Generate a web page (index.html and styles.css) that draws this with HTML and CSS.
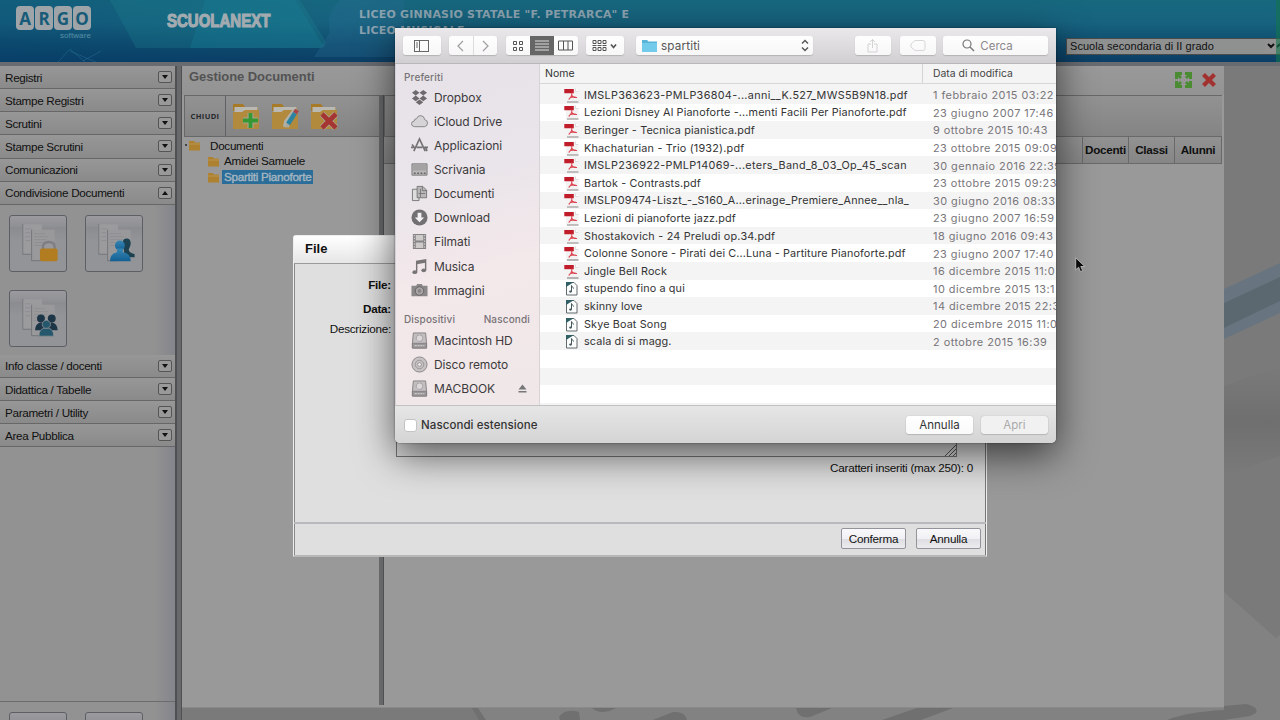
FILE: index.html
```html
<!DOCTYPE html>
<html lang="it">
<head>
<meta charset="utf-8">
<title>Gestione Documenti</title>
<link rel="stylesheet" href="styles.css">
</head>
<body>
<svg class="defs" width="0" height="0">
  <defs>
    <linearGradient id="steel" x1="0" y1="0" x2="0" y2="1"><stop offset="0" stop-color="#3587b4"/><stop offset="1" stop-color="#155f93"/></linearGradient>
    <linearGradient id="band" x1="0" y1="0" x2="0" y2="1"><stop offset="0" stop-color="#6e6e6e" stop-opacity="0"/><stop offset=".5" stop-color="#6c6c6c"/><stop offset="1" stop-color="#6e6e6e" stop-opacity="0"/></linearGradient>
    <symbol id="docs" viewBox="0 0 56 56"><path d="M12 8.500h20v10h-10v20h-10z" fill="#9b9b9e"/><path d="M12.500 8v31h9" fill="none" stroke="#77787b"/><path d="M21 14h24v31h-24z" fill="#99999c"/><path d="M21.500 14v31.500h10" fill="none" stroke="#737578"/><path d="M24 18h11M24 21h14M24 24h13M24 27h14M24 30h10M15 13h6M15 17h5M15 21h5M15 25h5" stroke="#8b8c8f" stroke-width=".8"/></symbol>
    <symbol id="folder" viewBox="0 0 28 28"><path d="M1 2h10l2 3h13v4H1z" fill="#a77a28"/><path d="M2.500 5h23v6h-23z" fill="#b9b8b2"/><path d="M1 10h9l3-2h14v19H1z" fill="#b18a3d"/></symbol>
    <symbol id="minif" viewBox="0 0 12 11"><path d="M0 1h5l1 1.500h5v8H0z" fill="#ad812f"/><path d="M0 4h11" stroke="#b99552"/></symbol>
    <symbol id="pdf" viewBox="0 0 15 15"><path d="M2 .5h9.500l3 3v11H2z" fill="#f4f3f3"/><path d="M11.500.5v3h3" fill="#fff" stroke="#ccc" stroke-width=".6"/><path d="M.3 1h9.500v4.200H.3z" fill="#c01c2a"/><path d="M7.700 4.500c.7 2.500-.9 5-3 7M7.500 7c1 2.100 3 2.700 5.500 2.500M5.500 10c2-.9 4-1.200 6.500-.8" fill="none" stroke="#dc4652" stroke-width="1.100"/><path d="M3 14h11.500" stroke="#8a8585" stroke-width="1.200"/></symbol>
    <symbol id="mus" viewBox="0 0 15 15"><path d="M2.500 1.500h7.500l3 3v9.500H2.500z" fill="#fbfcfc" stroke="#62696c"/><path d="M2 1h8L2 6z" fill="#305f65"/><path d="M7.500 10.500v-6q.3 1.400 2.500 3" fill="none" stroke="#46575e"/><ellipse cx="6.500" cy="10.600" rx="1.400" ry="1.100" fill="#46575e"/></symbol>
    <symbol id="hd" viewBox="0 0 18 18"><path d="M2.500 1h13l1 11v5h-15v-5z" fill="#c2bdbf" stroke="#858183"/><path d="M1.500 12h15v5h-15z" fill="#9b9799" stroke="#858183"/><circle cx="9" cy="6.500" r="3.500" fill="#dcd7d9" stroke="#a5a0a2"/><path d="M9 6.500l-3 3M4 14.500h10" stroke="#ddd" stroke-dasharray="2 1"/></symbol>
    <symbol id="disc" viewBox="0 0 18 18"><circle cx="9" cy="9" r="8" fill="#c6c1c3" stroke="#8a8688"/><circle cx="9" cy="9" r="4.500" fill="none" stroke="#999597"/><circle cx="9" cy="9" r="2" fill="#eee" stroke="#918d8f"/></symbol>
  </defs>
</svg>
<div class="screen">
  <header class="top">
    <svg class="top-art" viewBox="0 0 1280 62" preserveAspectRatio="none">
      <path d="M110 0H300l25 40q2 8-5 8H136z" fill="#1d8090" opacity=".3"/><path d="M205 0h90l28 45q0 3-4 3H190z" fill="#178297" opacity=".3"/>
      <path d="M340 0q-15 15-10 32l-16 25h90V0z" fill="#2b6d94" opacity=".3"/>
      <path d="M58 62l12-13 15 13M70 51l28 12M83 61l18-10" fill="none" stroke="#3180a6" opacity=".35"/>
    </svg>
    <div class="argo"><div class="tiles"><b>A</b><b>R</b><b>G</b><b>O</b></div><span class="soft">software</span></div>
    <div class="brand">SCUOLANEXT</div>
    <div class="school">LICEO GINNASIO STATALE "F. PETRARCA" E<br>LICEO MUSICALE</div>
    <div class="select"><span>Scuola secondaria di II grado</span><svg viewBox="0 0 15 12" width="15" height="12"><path d="M0 0h15v12H0z" fill="#929292"/><path d="M3 4l3 3 3-3M12 7l3-3" fill="none" stroke="#111" stroke-width="2"/></svg></div>
    <i class="edge"></i>
  </header>
  <div class="body">
    <nav class="side">
      <div class="acc"><span>Registri</span><i class="dd"></i></div>
      <div class="acc"><span>Stampe Registri</span><i class="dd"></i></div>
      <div class="acc"><span>Scrutini</span><i class="dd"></i></div>
      <div class="acc"><span>Stampe Scrutini</span><i class="dd"></i></div>
      <div class="acc"><span>Comunicazioni</span><i class="dd"></i></div>
      <div class="acc"><span>Condivisione Documenti</span><i class="dd up"></i></div>
      <div class="tools">
        <div class="tool"><svg viewBox="0 0 56 56"><use href="#docs"/><path d="M33 36v-4q0-5.500 6-5.500t6 5.500v4" fill="none" stroke="#7d7f82" stroke-width="2.500"/><rect x="30" y="33" width="18" height="13" rx="2" fill="#b17d20"/></svg></div>
        <div class="tool"><svg viewBox="0 0 56 56"><use href="#docs"/><path d="M37 27q0-4 4-4t4 5q0 3-2 6 0 3 6 5v3H39z" fill="#1c4251"/><circle cx="34" cy="30" r="5" fill="url(#steel)"/><path d="M31 33h6v4q8 1 8 9H24q0-8 7-9z" fill="url(#steel)"/></svg></div>
        <div class="tool"><svg viewBox="0 0 56 56"><use href="#docs"/><g fill="#1c3547"><circle cx="31" cy="28" r="4"/><circle cx="42" cy="28" r="4"/><path d="M25 40q0-7 6-8h11q6 1 6 8z"/></g><g fill="#25586c" stroke="#8f9092" stroke-width=".8"><circle cx="36.500" cy="34" r="4.200"/><path d="M29 46q0-7 5-8h5q5 1 5 8z"/></g></svg></div>
      </div>
      <div class="acc"><span>Info classe / docenti</span><i class="dd"></i></div>
      <div class="acc"><span>Didattica / Tabelle</span><i class="dd"></i></div>
      <div class="acc"><span>Parametri / Utility</span><i class="dd"></i></div>
      <div class="acc"><span>Area Pubblica</span><i class="dd"></i></div>
      <div class="fill"></div>
      <div class="stubs"><div class="tool"></div><div class="tool"></div></div>
    </nav>
    <div class="split"></div>
    <main class="main">
      <div class="title"><h1>Gestione Documenti</h1>
        <svg width="44" height="18" viewBox="0 0 44 18"><g fill="#4b8c33"><path d="M1 1h7v3H6l2 2-2 2-2-2v2H1zM18 1h-7v3h2l-2 2 2 2 2-2v2h3zM1 17h7v-3H6l2-2-2-2-2 2v-2H1zM18 17h-7v-3h2l-2-2 2-2 2 2v-2h3z"/></g><path d="M29.500 3.500l11 11M40.500 3.500l-11 11" stroke="#a23230" stroke-width="4.200"/></svg>
      </div>
      <div class="cols">
        <section class="tree">
          <div class="bar"><div class="close">CHIUDI</div>
            <svg viewBox="0 0 28 28"><use href="#folder"/><path d="M18.500 11v15M11 18.500h15" stroke="#a7a591" stroke-width="6"/><path d="M18.500 11v15M11 18.500h15" stroke="#369832" stroke-width="3.800"/></svg>
            <svg viewBox="0 0 28 28"><use href="#folder"/><path d="M15 25l1-5 9-12" stroke="#b3b2aa" stroke-width="6" fill="none"/><path d="M17 22l7-11" stroke="#2b83a0" stroke-width="4.500"/><path d="M14 26l1-5 4 3z" fill="#aaa79b"/><path d="M24 11l2-3" stroke="#a94347" stroke-width="4.500"/></svg>
            <svg viewBox="0 0 28 28"><use href="#folder"/><path d="M12 12l14 14M26 12L12 26" stroke="#aaa08a" stroke-width="6.500"/><path d="M12 12l14 14M26 12L12 26" stroke="#a53532" stroke-width="4.600"/></svg>
          </div>
          <div class="node root"><i></i><svg viewBox="0 0 12 11"><use href="#minif"/></svg><span>Documenti</span></div>
          <div class="node kid"><svg viewBox="0 0 12 11"><use href="#minif"/></svg><span>Amidei Samuele</span></div>
          <div class="node kid"><svg viewBox="0 0 12 11"><use href="#minif"/></svg><span class="sel">Spartiti Pianoforte</span></div>
        </section>
        <div class="vbar"></div>
        <section class="list"><div class="bar"></div><div class="heads"><b></b><b>Docenti</b><b>Classi</b><b>Alunni</b></div></section>
      </div>
    </main>
    <svg class="right-art" viewBox="0 0 56 654" preserveAspectRatio="none"><path d="M0 0h56v654H0z" fill="#7a7a7a"/><path d="M0 223L56 197v50L0 273z" fill="#687580"/><path d="M0 237l56-26v24L0 262z" fill="#5c6870"/><path d="M0 320l56-20v90l-56 20z" fill="url(#band)" opacity=".8"/><path d="M0 526l52 46 4-3v85H0z" fill="#828282"/><path d="M0 640l22-2q13 3 10 9l-6 3-26 4z" fill="#707070"/></svg>
    <svg class="foot-art" viewBox="0 0 1042 12" preserveAspectRatio="none"><path d="M0 0h1042v12H0z" fill="#828282"/><path d="M0 0h292l8 12H0z" fill="#7a7a7a"/><path d="M290 0h6l8 12h-7zM377 9q6-9 20-5l1 8h-20zM410 0h24q-15 8-24 0zM471 12l20-8q12-1 14 8zM614 0h36l-22 9q-12 2-14-9zM700 12l35-12h36l-32 12zM985 12q20-8 57-10v10z" fill="#707070"/></svg>
  </div>

  <section class="modal">
    <h2>File</h2>
    <div class="form">
      <label class="req">File:</label><label class="req">Data:</label><label>Descrizione:</label>
      <div class="area"><svg width="12" height="12"><path d="M1 12L12 1M5 12l7-7M9 12l3-3" stroke="#555"/></svg></div>
      <div class="count">Caratteri inseriti (max 250): 0</div>
    </div>
    <div class="actions"><button>Conferma</button><button>Annulla</button></div>
  </section>

  <section class="finder">
    <div class="fbar">
      <div class="fb b1"><svg width="16" height="12"><rect x=".5" y=".5" width="14" height="11" fill="none" stroke="#666"/><path d="M5.500 0v12M2 3h2M2 5h2M2 7h2" stroke="#666"/></svg></div>
      <div class="fb b2"><span><svg width="9" height="14"><path d="M7 2L2 7l5 5" fill="none" stroke="#a3a1a4" stroke-width="1.300"/></svg></span><span><svg width="9" height="14"><path d="M2 2l5 5-5 5" fill="none" stroke="#a3a1a4" stroke-width="1.300"/></svg></span></div>
      <div class="fb b3"><span><svg width="10" height="11"><path d="M.5 1.500h3v3h-3zM6.500 1.500h3v3h-3zM.5 7.500h3v3h-3zM6.500 7.500h3v3h-3z" fill="none" stroke="#555"/></svg></span><span class="on"><svg width="14" height="11"><path d="M0 1h14M0 4h14M0 7h14M0 10h14" stroke="#ddd" stroke-width="1.200"/></svg></span><span><svg width="16" height="11"><path d="M.5 1h14v9H.5zM5.500 1v9M10 1v9" fill="none" stroke="#555"/></svg></span></div>
      <div class="fb b4"><svg width="26" height="14"><g fill="none" stroke="#555"><path d="M1 1.500h3v3H1zM6 1.500h3v3H6zM11 1.500h3v3h-3zM1 8.500h3v3H1zM6 8.500h3v3H6zM11 8.500h3v3h-3z"/><path d="M.5 6.500h14" stroke-dasharray="4 1"/><path d="M19 5.500l2.500 3 2.500-3" stroke-width="1.700"/></g></svg></div>
      <div class="fb b5"><svg width="15" height="13"><path d="M0 1h5l1.500 1.500H15V13H0z" fill="#59b5d8"/><path d="M0 4h15v9H0z" fill="#72cbea"/></svg><span>spartiti</span><svg width="8" height="13"><path d="M1 4.500L4 1.500l3 3M1 8.500l3 3 3-3" fill="none" stroke="#555" stroke-width="1.400"/></svg></div>
      <div class="fb b6"><svg width="12" height="15"><path d="M4 6H1v8h9V6H7M5.500 10V1.500M3 4l2.500-2.500L8 4" fill="none" stroke="#d3d1d3"/></svg></div>
      <div class="fb b7"><svg width="16" height="11"><path d="M5 .5h8q2 0 2 2v6q0 2-2 2H5L1 7V4z" fill="none" stroke="#d8d6d8"/></svg></div>
      <div class="fb b8"><svg width="13" height="13"><circle cx="5" cy="5" r="4" fill="none" stroke="#777" stroke-width="1.200"/><path d="M8 8l4 4" stroke="#777" stroke-width="1.500"/></svg><span>Cerca</span></div>
    </div>
    <div class="fbody">
      <aside class="fav">
        <div class="fh">Preferiti</div>
        <div class="fi"><svg viewBox="0 0 18 18"><path d="M5 1l4 3-4 3-4-3zM13 1l4 3-4 3-4-3zM5 7l4 3-4 3-4-3zM13 7l4 3-4 3-4-3zM9 11l4 3-4 3-4-3z" fill="#6d6b6d"/></svg>Dropbox</div>
        <div class="fi"><svg viewBox="0 0 18 18"><path d="M4 14.500q-3.500-.2-3.500-3t3-3q-.2-2.500 2.500-2.500 1-3.500 4.500-3.200t4 4.200q3 .7 3 3.700t-3 3.800z" fill="#d6d4d6" stroke="#858385"/></svg>iCloud Drive</div>
        <div class="fi"><svg viewBox="0 0 18 18"><path d="M3 15l6-13 6 13M0 11h4M6 11h6M14 11h4M1 8l2 2M17 15l-2-5" fill="none" stroke="#747274" stroke-width="1.700"/></svg>Applicazioni</div>
        <div class="fi"><svg viewBox="0 0 18 18"><path d="M1 3h16v12H1z" fill="#bab7b9" stroke="#7b797b"/><path d="M2 4h14v6H2z" fill="#a5a2a4"/><path d="M3 13h2M6.500 13h2M10 13h2M13.500 13h2" stroke="#666" stroke-width="1.500"/></svg>Scrivania</div>
        <div class="fi"><svg viewBox="0 0 18 18"><path d="M1.500 4.500h7v12h-7z" fill="#ddd" stroke="#777"/><path d="M6.500 1.500h6l4 4v8h-10z" fill="#bbb8ba" stroke="#777"/><path d="M12 1v5h5M10 4v9M8 9h7" fill="none" stroke="#777"/></svg>Documenti</div>
        <div class="fi"><svg viewBox="0 0 18 18"><circle cx="9" cy="9" r="8.500" fill="#727072"/><path d="M7 4h4v5h3l-5 5-5-5h3z" fill="#f3f0f2"/></svg>Download</div>
        <div class="fi"><svg viewBox="0 0 18 18"><path d="M2 1h14v16H2z" fill="#858284"/><path d="M5 2h8v6H5zM5 10h8v6H5z" fill="#cecaca"/><path d="M3.500 2v15M14.500 2v15" stroke="#ddd" stroke-dasharray="1.500 1.500"/></svg>Filmati</div>
        <div class="fi"><svg viewBox="0 0 18 18"><path d="M6 15V3.500L15.500 2v11" fill="none" stroke="#777476" stroke-width="1.500"/><path d="M6 3.500L15.500 2v3L6 6.500z" fill="#777476"/><ellipse cx="4" cy="15" rx="2.500" ry="2" fill="#777476"/><ellipse cx="13.500" cy="13" rx="2.500" ry="2" fill="#777476"/></svg>Musica</div>
        <div class="fi"><svg viewBox="0 0 18 18"><path d="M.5 4h5l1-2h5l1 2h5v11H.5z" fill="#8b888a"/><circle cx="9" cy="9.500" r="4.500" fill="#aaa6a8" stroke="#646163"/><circle cx="9" cy="9.500" r="2" fill="#888486"/></svg>Immagini</div>
        <div class="fh dev"><span>Dispositivi</span><span>Nascondi</span></div>
        <div class="fi"><svg viewBox="0 0 18 18"><use href="#hd"/></svg>Macintosh HD</div>
        <div class="fi"><svg viewBox="0 0 18 18"><use href="#disc"/></svg>Disco remoto</div>
        <div class="fi"><svg viewBox="0 0 18 18"><use href="#hd"/></svg>MACBOOK<svg class="eject" viewBox="0 0 9 9"><path d="M.5 5.500l4-5 4 5zM.5 7h8v1.500h-8z" fill="#777"/></svg></div>
      </aside>
      <div class="files">
        <div class="fr hd"><span>Nome</span><time>Data di modifica</time></div>
        <div class="rows">
          <div class="fr wide"><svg><use href="#pdf"/></svg><span>IMSLP363623-PMLP36804-...anni__K.527_MWS5B9N18.pdf</span><time>1 febbraio 2015 03:22</time></div>
          <div class="fr"><svg><use href="#pdf"/></svg><span>Lezioni Disney Al Pianoforte -...menti Facili Per Pianoforte.pdf</span><time>23 giugno 2007 17:46</time></div>
          <div class="fr"><svg><use href="#pdf"/></svg><span>Beringer - Tecnica pianistica.pdf</span><time>9 ottobre 2015 10:43</time></div>
          <div class="fr mid"><svg><use href="#pdf"/></svg><span>Khachaturian - Trio (1932).pdf</span><time>23 ottobre 2015 09:09</time></div>
          <div class="fr wide"><svg><use href="#pdf"/></svg><span>IMSLP236922-PMLP14069-...eters_Band_8_03_Op_45_scan</span><time>30 gennaio 2016 22:39</time></div>
          <div class="fr"><svg><use href="#pdf"/></svg><span>Bartok - Contrasts.pdf</span><time>23 ottobre 2015 09:23</time></div>
          <div class="fr mid"><svg><use href="#pdf"/></svg><span>IMSLP09474-Liszt_-_S160_A...erinage_Premiere_Annee__nla_</span><time>30 giugno 2016 08:33</time></div>
          <div class="fr"><svg><use href="#pdf"/></svg><span>Lezioni di pianoforte jazz.pdf</span><time>23 giugno 2007 16:59</time></div>
          <div class="fr mid"><svg><use href="#pdf"/></svg><span>Shostakovich - 24 Preludi op.34.pdf</span><time>18 giugno 2016 09:43</time></div>
          <div class="fr"><svg><use href="#pdf"/></svg><span>Colonne Sonore - Pirati dei C...Luna - Partiture Pianoforte.pdf</span><time>23 giugno 2007 17:40</time></div>
          <div class="fr"><svg><use href="#pdf"/></svg><span>Jingle Bell Rock</span><time>16 dicembre 2015 11:0</time></div>
          <div class="fr"><svg><use href="#mus"/></svg><span>stupendo fino a qui</span><time>10 dicembre 2015 13:1</time></div>
          <div class="fr"><svg><use href="#mus"/></svg><span>skinny love</span><time>14 dicembre 2015 22:3</time></div>
          <div class="fr"><svg><use href="#mus"/></svg><span>Skye Boat Song</span><time>20 dicembre 2015 11:0</time></div>
          <div class="fr"><svg><use href="#mus"/></svg><span>scala di si magg.</span><time>2 ottobre 2015 16:39</time></div>
        </div>
      </div>
    </div>
    <div class="ffoot"><i class="cb"></i><span class="ext">Nascondi estensione</span><div class="fbtn">Annulla</div><div class="fbtn off">Apri</div></div>
  </section>
  <svg class="cursor" width="12" height="17" viewBox="0 0 12 17"><path d="M.7.800v12l2.900-2.600 1.900 4.500 2.200-1-1.900-4.200h4z" fill="#0a0a0a" stroke="#bbb" stroke-width=".9"/></svg>
</div>
</body>
</html>
```
FILE: styles.css
```css
* { box-sizing: border-box; }
body { margin: 0; }
.defs { position: absolute; }
.screen { position: relative; width: 1280px; height: 720px; overflow: hidden; background: #7a7a7a; font-family: "Liberation Sans", Arial, sans-serif; font-size: 12px; color: #101010; display: flex; flex-direction: column; }

.top { position: relative; height: 62px; flex: none; background: linear-gradient(90deg, rgba(0,60,110,.25), rgba(0,0,0,0) 30%), linear-gradient(#17687f, #17637f 35%, #0e4a6c 75%, #0b3f66); display: flex; align-items: flex-start; }
.top-art { position: absolute; left: 0; top: 0; width: 1280px; height: 62px; }
.argo { position: relative; margin: 6px 0 0 16px; width: 75px; display: flex; flex-direction: column; }
.tiles { display: flex; gap: 1px; }
.tiles b { width: 18px; height: 24px; border-radius: 4px; background: #9ea4a7; color: #175b79; line-height: 25px; text-align: center; font-family: "Open Sans", sans-serif; font-weight: 700; font-size: 17px; }
.soft { align-self: flex-end; font-size: 8px; line-height: 9px; margin-top: 1px; color: #5790a8; letter-spacing: .1px; }
.brand { position: relative; margin: 11px 0 0 76px; width: 104px; font-weight: 700; font-size: 19px; line-height: 20px; color: #a2abb0; -webkit-text-stroke: 1.2px #a2abb0; transform: scaleX(.79); transform-origin: 0 0; }
.school { position: relative; margin: 7px 0 0 88px; width: 400px; font-family: "DejaVu Sans", Verdana, sans-serif; font-weight: 700; font-size: 11px; line-height: 16px; color: #8ba3b0; letter-spacing: .2px; white-space: nowrap; }
.select { position: absolute; left: 1066px; top: 38px; width: 214px; height: 17px; background: #8f9090; border: 1px solid #4b4b4b; border-right: 0; display: flex; justify-content: space-between; align-items: center; padding: 0 0 1px 3px; font-size: 11px; line-height: 14px; letter-spacing: .05px; }
.edge { position: absolute; right: 0; top: 0; width: 4px; height: 62px; background: #13744f; opacity: .6; }

.body { flex: 1; border-top: 4px solid #686b70; display: grid; grid-template-columns: 175px 7px 1042px 56px; grid-template-rows: 642px 12px; }
.side { grid-row: 1 / 3; display: flex; flex-direction: column; background: #929292; }
.acc { height: 23.150px; flex: none; display: flex; justify-content: space-between; align-items: center; padding: 0 3px 0 5px; background: linear-gradient(#979797, #8a8a8a); border-bottom: 1px solid #676767; font-size: 11.700px; letter-spacing: -.31px; }
.acc .dd { width: 14px; height: 12px; border: 1px solid #555; border-radius: 2px; background: #999; display: flex; justify-content: center; align-items: center; }
.dd::after { content: ""; border: 3.500px solid transparent; border-top: 4px solid #111; border-bottom: 0; }
.dd.up::after { border-top: 0; border-bottom: 4px solid #111; }
.tools { height: 150px; flex: none; padding: 10px 0 0 9px; display: grid; grid-template-columns: 58px 58px; grid-template-rows: 57px 57px; gap: 18px; background: linear-gradient(90deg, #929292 154px, #84858c); }
.tool { width: 58px; height: 57px; border: 1px solid #5c5f64; border-radius: 3px; background: linear-gradient(#9a9a9f, #8f9094 20%, #8b8c90 21%, #939498 45%); }
.tool svg { display: block; width: 56px; height: 55px; }
.fill { flex: 1; background: linear-gradient(90deg, #929292 154px, #84858c); border-bottom: 1px solid #6b6b6b; }
.stubs { height: 18px; flex: none; overflow: hidden; padding: 10px 0 0 9px; display: flex; gap: 18px; background: linear-gradient(90deg, #929292 154px, #84858c); }
.split { grid-row: 1 / 3; background: #68696b; border-left: 2px solid #4f5051; border-right: 1px solid #505052; }
.main { background: #999; display: flex; flex-direction: column; border-bottom: 1px solid #8a8a8a; }
.title { height: 29px; flex: none; display: flex; justify-content: space-between; padding: 3px 6px 0 7px; background: linear-gradient(#999, #939393); }
.title h1 { margin: 0; font-size: 13px; line-height: 15px; color: #535353; letter-spacing: -.05px; }
.title svg { margin-top: 2px; }
.cols { flex: 1; display: flex; padding: 0 2px 2px 2px; }
.tree { width: 195px; display: flex; flex-direction: column; }
.bar { height: 42px; border-top: 1px solid #66686a; border-bottom: 1px solid #66686a; background: linear-gradient(#929292, #848484); display: flex; align-items: center; }
.tree .bar { gap: 11px; border-left: 1px solid #66686a; }
.tree .bar svg { width: 28px; height: 28px; }
.close { width: 41px; height: 40px; line-height: 40px; text-align: center; border-right: 1px solid #5f6164; font-family: "Open Sans", sans-serif; font-weight: 700; font-size: 7.500px; letter-spacing: .35px; color: #25272c; margin-right: -5px; }
.node { display: flex; align-items: center; height: 16px; white-space: nowrap; font-size: 11.700px; letter-spacing: -.29px; }
.node svg { width: 12px; height: 11px; flex: none; }
.root { padding-left: 1px; }
.root i { width: 2px; height: 2px; background: #444; margin-right: 2px; }
.root span { margin-left: 9px; }
.kid { padding-left: 24px; }
.kid span { margin-left: 2px; padding: 0 2px; line-height: 14px; }
.kid span.sel { background: #2a6d98; color: #a5b5c0; -webkit-text-stroke: .4px #a5b5c0; }
.vbar { width: 5px; background: #66686a; border-right: 1px solid #4e4f50; }
.list { flex: 1; }
.list .bar { border-left: 1px solid #66686a; }
.heads { display: grid; grid-template-columns: 1fr 46px 46px 47px; height: 26px; margin-top: -1px; }
.heads b { border: 1px solid #68696b; border-width: 1px 1px 1px 0; background: linear-gradient(#929292, #868686); text-align: center; line-height: 26px; font-size: 11.700px; letter-spacing: -.3px; }
.right-art { width: 56px; height: 654px; grid-column: 4; grid-row: 1 / 3; }
.foot-art { grid-column: 3; grid-row: 2; width: 1042px; height: 12px; }

.modal { position: absolute; left: 293px; top: 235px; width: 694px; height: 322px; background: #dfdfdf; border: 1px solid #eee; border-bottom: 2px solid #b8b8b8; display: flex; flex-direction: column; box-shadow: inset 1px 0 #888, inset -1px 0 #777; border-radius: 3px 3px 0 0; }
.modal h2 { margin: 0; height: 28px; padding-left: 11px; font-size: 13px; line-height: 26px; border-bottom: 1px solid #9b9b9b; background: linear-gradient(#fff, #e6e6e6); flex: none; }
.form { flex: 1; display: flex; flex-direction: column; padding: 13px 13px 0 1px; font-size: 11.700px; letter-spacing: -.25px; }
.form label { width: 96px; text-align: right; line-height: 15px; height: 20px; }
.form .req { font-weight: 700; height: 24px; }
.form .req + .req { height: 20px; }
.area { margin: -2px 16px 0 101px; height: 118px; border: 1px solid #777; background: #ddd; display: flex; justify-content: flex-end; align-items: flex-end; }
.count { text-align: right; margin-top: 3px; line-height: 15px; }
.actions { height: 33px; flex: none; border-top: 2px solid #b9b9bd; display: flex; justify-content: flex-end; gap: 10px; padding: 4px 5px; }
.actions button { width: 65px; height: 21px; padding: 0; border: 1px solid #93939b; border-radius: 2px; background: linear-gradient(#f9f9fb, #f1f1f5 50%, #dedee2 51%, #ececef); font: 11.700px/18px "Liberation Sans", Arial, sans-serif; letter-spacing: -.2px; color: #111; }

.finder { position: absolute; left: 395px; top: 28px; width: 661px; height: 415px; border-radius: 1px 1px 5px 5px; background: #ececec; box-shadow: 0 12px 38px rgba(0,0,0,.62), 0 0 2px rgba(0,0,0,.5); display: flex; flex-direction: column; overflow: hidden; font-family: Inter, "Noto Sans", sans-serif; color: #333; }
.fbar { height: 36px; flex: none; background: linear-gradient(#ebe8eb, #d2cfd2); border-bottom: 1px solid #bab7ba; display: flex; align-items: center; padding: 0 0 0 8px; }
.fb { height: 19px; border-radius: 3px; background: linear-gradient(#fefefe, #f8f7f8); box-shadow: 0 1px 1px #b5b2b5; display: flex; align-items: center; justify-content: center; flex: none; }
.fb span { flex: 1; height: 19px; display: flex; align-items: center; justify-content: center; }
.b1 { width: 38px; }
.b2 { width: 48px; margin-left: 8px; }
.b2 span + span { border-left: 1px solid #dedbde; }
.b3 { width: 72px; margin-left: 9px; }
.b3 .on { background: #666; }
.b4 { width: 38px; margin-left: 8px; }
.b5 { width: 177px; margin-left: 12px; padding: 0 4px 0 6px; font-size: 11.700px; color: #555; letter-spacing: .15px; }
.fb.b5 span { justify-content: flex-start; margin-left: 4px; }
.b6 { width: 36px; margin-left: 42px; }
.b7 { width: 36px; margin-left: 9px; }
.b8 { width: 105px; margin-left: 7px; padding-right: 16px; font-size: 11.500px; color: #8a888a; }
.fb.b8 span { flex: none; margin-left: 5px; }
.fbody { height: 341px; flex: none; display: flex; }
.fav { width: 145px; flex: none; background: linear-gradient(165deg, #e6e2e7, #eae5ea 35%, #f3e8ea 60%, #efe7e8); border-right: 1px solid #d9d3d6; border-left: 1px solid #d5d0d8; padding-top: 6px; }
.fh { height: 15px; line-height: 15px; padding-left: 8px; font-size: 10px; font-weight: 500; color: #777376; letter-spacing: .15px; }
.dev { height: 26px; line-height: 34px; display: flex; justify-content: space-between; padding-right: 9px; }
.fi { height: 24.150px; display: flex; align-items: center; padding-left: 15px; font-size: 12px; letter-spacing: -.1px; color: #3d3a3c; white-space: nowrap; }
.fi > svg { width: 17px; height: 17px; margin-right: 6px; flex: none; }
.fi > svg.eject { width: 9px; height: 9px; margin: 0 12px 0 auto; }
.files { flex: 1; background: #fff; overflow: hidden; }
.fr { height: 17.600px; display: flex; align-items: center; padding: 1px 0 0 24px; font-size: 10.800px; letter-spacing: .14px; white-space: nowrap; }
.fr.mid { letter-spacing: .22px; }
.fr.wide { letter-spacing: .34px; }
.fr svg { width: 15px; height: 15px; margin-right: 5px; flex: none; }
.fr span { width: 349px; flex: none; }
.fr time { color: #77757a; font-size: 10.900px; letter-spacing: .47px; }
.fr.hd { height: 20px; background: #f4f4f4; border-bottom: 1px solid #d7d7d7; font-size: 10.500px; padding: 0 0 0 5px; letter-spacing: 0; }
.fr.hd span { width: 378px; line-height: 19px; border-right: 1px solid #d4d4d4; }
.fr.hd time { padding-left: 10px; color: #444; font-size: 10.400px; letter-spacing: 0; }
.rows { height: 321px; padding-top: 2px; background: repeating-linear-gradient(#f4f4f4 0, #f4f4f4 17.600px, #fff 17.600px, #fff 35.200px) 0 2px; }
.ffoot { height: 38px; flex: none; border-top: 1px solid #c1c1c1; background: linear-gradient(#e6e6e6, #d4d4d4); display: flex; align-items: center; padding: 1px 8px 0 9px; font-size: 11.500px; }
.cb { width: 13px; height: 13px; border: 1px solid #c4c4c4; border-radius: 3px; background: #fff; }
.ext { flex: 1; margin-left: 4px; letter-spacing: .08px; font-weight: 500; }
.fbtn { width: 67px; height: 18px; line-height: 18px; border-radius: 3px; background: linear-gradient(#fff, #fafafa); box-shadow: 0 0 1px #999, 0 1px 1px #bbb; text-align: center; }
.fbtn.off { margin-left: 8px; background: #f1f1f1; color: #aaa; }
.cursor { position: absolute; left: 1075px; top: 257px; }
```
